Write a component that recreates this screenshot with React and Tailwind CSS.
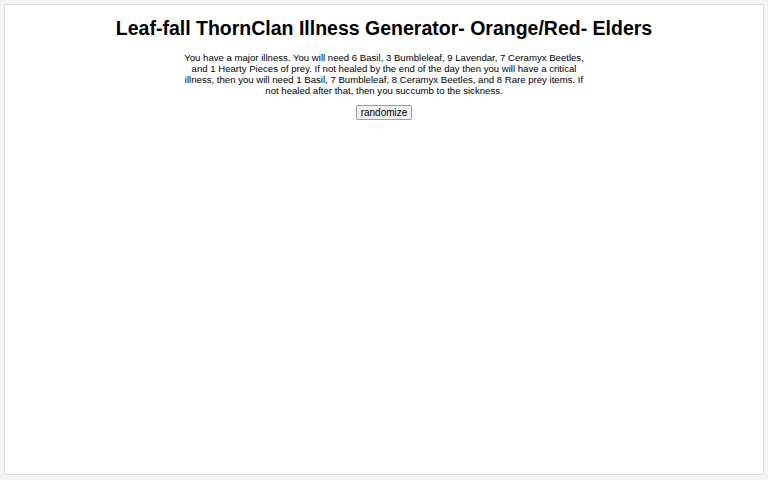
export default function App() {
  return (
    <div className="min-h-screen bg-[#f3f3f3] p-[4px] font-['Liberation_Sans',Arial,sans-serif]">
      <div className="h-[471px] bg-white border border-[#dcdcdc] flex flex-col items-center text-black">
        <h1 className="mt-[11px] text-[19.5px] leading-[24px] font-bold">
          Leaf-fall ThornClan Illness Generator- Orange/Red- Elders
        </h1>
        <p className="mt-[12px] w-[412px] text-center text-[9.6px] leading-[11px]">
          You have a major illness. You will need 6 Basil, 3 Bumbleleaf, 9 Lavendar, 7 Ceramyx Beetles,
          and 1 Hearty Pieces of prey. If not healed by the end of the day then you will have a critical
          illness, then you will need 1 Basil, 7 Bumbleleaf, 8 Ceramyx Beetles, and 8 Rare prey items. If
          not healed after that, then you succumb to the sickness.
        </p>
        <button
          type="button"
          className="mt-[9px] px-[4px] h-[15px] text-[10px] leading-[13px] border border-[#a0a0a0] rounded-[2px] bg-[#f0f0f0]"
        >
          randomize
        </button>
      </div>
    </div>
  );
}
